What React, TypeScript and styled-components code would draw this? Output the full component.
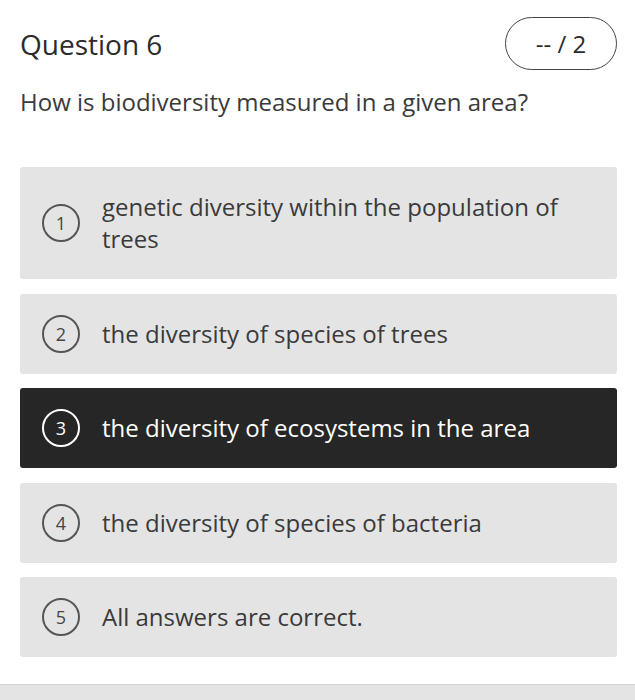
import styled, { createGlobalStyle } from 'styled-components';

const GlobalStyle = createGlobalStyle`
  html, body {
    margin: 0;
    padding: 0;
    background: #ffffff;
  }
  body {
    font-family: "Open Sans", "Noto Sans", sans-serif;
    color: #333333;
  }
`;

const options = [
  'genetic diversity within the population of trees',
  'the diversity of species of trees',
  'the diversity of ecosystems in the area',
  'the diversity of species of bacteria',
  'All answers are correct.',
];

const selected = 2;

const App = () => {
  return (
    <>
      <GlobalStyle />
      <Page>
        <Header>
          <Title>Question 6</Title>
          <Score>-- / 2</Score>
        </Header>
        <Prompt>How is biodiversity measured in a given area?</Prompt>
        <OptionList>
          {options.map((text, i) => (
            <Option key={i} $active={i === selected}>
              <Badge $active={i === selected}>{i + 1}</Badge>
              <OptionText>{text}</OptionText>
            </Option>
          ))}
        </OptionList>
      </Page>
      <Footer />
    </>
  );
};

const Page = styled.div`
  padding: 17px 18px 0 20px;
  height: 684px;
  box-sizing: border-box;
`;

const Header = styled.div`
  display: flex;
  align-items: center;
  justify-content: space-between;
`;

const Title = styled.h1`
  margin: 0;
  font-size: 28px;
  font-weight: 400;
  color: #2b2b2b;
`;

const Score = styled.div`
  width: 112px;
  height: 53px;
  box-sizing: border-box;
  border: 1.5px solid #444;
  border-radius: 27px;
  display: flex;
  align-items: center;
  justify-content: center;
  font-size: 24px;
  color: #2b2b2b;
`;

const Prompt = styled.p`
  margin: 16px 0 0;
  font-size: 24px;
  line-height: 32px;
  color: #3a3a3a;
`;

const OptionList = styled.div`
  margin-top: 49px;
  display: flex;
  flex-direction: column;
  gap: 14.5px;
`;

const Option = styled.div<{ $active: boolean }>`
  display: flex;
  align-items: center;
  gap: 22px;
  padding: 24px 40px 24px 22px;
  border-radius: 3px;
  background: ${(p) => (p.$active ? '#262626' : '#e4e4e4')};
  color: ${(p) => (p.$active ? '#ffffff' : '#3a3a3a')};
`;

const Badge = styled.span<{ $active: boolean }>`
  flex: none;
  width: 38px;
  height: 38px;
  margin: -3px 0;
  box-sizing: border-box;
  border-radius: 50%;
  border: 2px solid ${(p) => (p.$active ? '#ffffff' : '#555555')};
  display: flex;
  align-items: center;
  justify-content: center;
  font-size: 18px;
  color: ${(p) => (p.$active ? '#ffffff' : '#444444')};
`;

const OptionText = styled.span`
  font-size: 24px;
  line-height: 32px;
`;

const Footer = styled.div`
  height: 16px;
  background: #e4e4e4;
  border-top: 1px solid #d2d2d2;
`;

export default App;
